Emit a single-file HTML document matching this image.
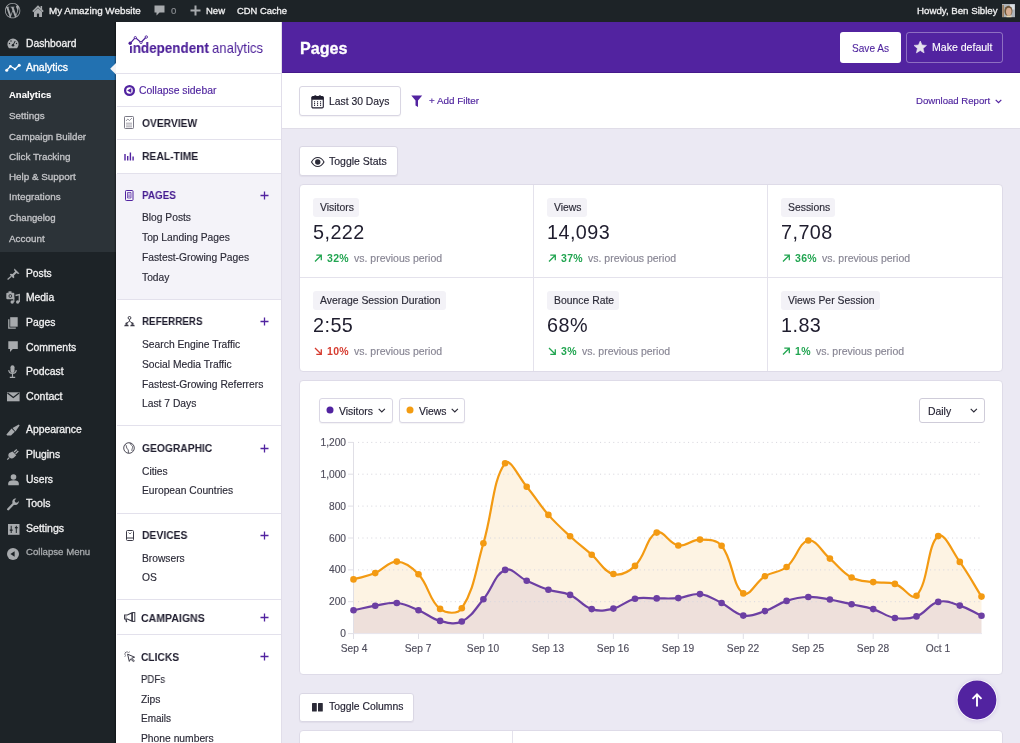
<!DOCTYPE html>
<html><head><meta charset="utf-8">
<style>
*{box-sizing:border-box;margin:0;padding:0}
html,body{width:1020px;height:743px;overflow:hidden}
body{position:relative;background:#ebe9f3;font-family:"Liberation Sans",sans-serif;color:#1e1d2b}
.t{position:absolute;white-space:nowrap;will-change:transform}
.r{position:absolute}
svg.r{overflow:visible}
</style></head>
<body>
<div class="r" style="left:0px;top:0px;width:1020px;height:22px;background:#1d2327"></div>
<div class="t" style="left:49.40px;top:4.69px;font-size:9.85px;line-height:12px;color:#f0f0f1;-webkit-text-stroke:0.3px #f0f0f1;">My Amazing Website</div>
<div class="t" style="left:170.60px;top:4.77px;font-size:9.6px;line-height:12px;color:#8c8f94;-webkit-text-stroke:0.15px #8c8f94;">0</div>
<div class="t" style="left:206.00px;top:4.81px;font-size:9.5px;line-height:12px;color:#f0f0f1;-webkit-text-stroke:0.3px #f0f0f1;">New</div>
<div class="t" style="left:236.70px;top:4.84px;font-size:9.4px;line-height:12px;color:#f0f0f1;-webkit-text-stroke:0.3px #f0f0f1;">CDN Cache</div>
<div class="t" style="left:916.50px;top:5.04px;font-size:9.7px;line-height:12px;color:#f0f0f1;-webkit-text-stroke:0.3px #f0f0f1;">Howdy, Ben Sibley</div>
<svg class="r" style="left:4.5px;top:3px" width="15.3" height="15.3" viewBox="0 0 24 24"><path fill="#a7aaad" d="M21.469 6.825c.84 1.537 1.318 3.3 1.318 5.175 0 3.979-2.156 7.456-5.363 9.325l3.295-9.527c.615-1.54.82-2.771.82-3.864 0-.405-.026-.78-.07-1.11m-7.981.105c.647-.03 1.232-.105 1.232-.105.582-.075.514-.93-.067-.899 0 0-1.755.135-2.88.135-1.064 0-2.850-.15-2.850-.15-.585-.03-.661.855-.075.885 0 0 .54.061 1.125.09l1.68 4.605-2.37 7.08L5.354 6.9c.649-.03 1.234-.1 1.234-.1.585-.075.516-.93-.065-.896 0 0-1.746.138-2.874.138-.2 0-.438-.008-.69-.015C4.911 3.15 8.235 1.215 12 1.215c2.809 0 5.365 1.072 7.286 2.833-.046-.003-.091-.009-.141-.009-1.06 0-1.812.923-1.812 1.914 0 .89.513 1.643 1.06 2.531.411.72.89 1.643.89 2.977 0 .915-.354 1.994-.821 3.479l-1.075 3.585-3.9-11.61.001.014zM12 22.784c-1.059 0-2.081-.153-3.048-.437l3.237-9.406 3.315 9.087c.024.053.05.101.078.149-1.12.393-2.325.609-3.582.609M1.211 12c0-1.564.336-3.05.935-4.39L7.29 21.709C3.694 19.96 1.212 16.271 1.211 12M12 0C5.385 0 0 5.385 0 12s5.385 12 12 12 12-5.385 12-12S18.615 0 12 0"/></svg>
<svg class="r" style="left:32px;top:5px" width="12" height="12.5" viewBox="0 0 12 12.5"><path d="M0.8,6.6 L6,1.4 L11.2,6.6" fill="none" stroke="#a7aaad" stroke-width="1.5"/><path d="M2,6.8 L6,2.9 L10,6.8 V12 H2 Z" fill="#a7aaad"/><rect x="8.6" y="1" width="1.5" height="3.5" fill="#a7aaad"/><rect x="4.9" y="8.6" width="2.2" height="3.4" fill="#1d2327"/></svg>
<svg class="r" style="left:154px;top:5px" width="11" height="12" viewBox="0 0 11 12"><path d="M0.5,0.5 h10 v7 h-5 l-3,3 v-3 h-2 z" fill="#a7aaad"/></svg>
<svg class="r" style="left:190px;top:5px" width="11" height="11" viewBox="0 0 11 11"><path d="M5.5,0.5 v10 M0.5,5.5 h10" stroke="#a7aaad" stroke-width="2"/></svg>
<svg class="r" style="left:1001.8px;top:3.7px" width="13" height="13.2" viewBox="0 0 13 13.2"><rect x="0" y="0" width="13" height="13.2" fill="#aeb4ba"/><rect x="8" y="0.5" width="4.5" height="5" fill="#d8dde0"/><rect x="0.3" y="1" width="1.6" height="12" fill="#9a7a5a"/><ellipse cx="6.4" cy="7" rx="4" ry="5.2" fill="#6e5638"/><ellipse cx="6.8" cy="7.6" rx="2.8" ry="3.9" fill="#d6ad92"/><rect x="4.5" y="11.5" width="5" height="1.7" fill="#e8d6b0"/></svg>
<div class="r" style="left:0px;top:22px;width:116px;height:721px;background:#1d2327"></div>
<div class="r" style="left:0px;top:80px;width:116px;height:172px;background:#2c3338"></div>
<div class="r" style="left:0px;top:56px;width:116px;height:24px;background:#2271b1"></div>
<div class="r" style="left:113.5px;top:22px;width:2.5px;height:721px;background:linear-gradient(90deg,rgba(0,0,0,0),rgba(0,0,0,0.4))"></div>
<svg class="r" style="left:110px;top:62.5px" width="6" height="11.5" viewBox="0 0 6 11.5"><path d="M6,0 L0.2,5.75 L6,11.5 Z" fill="#f4f4f6"/></svg>
<div class="t" style="left:26.10px;top:36.93px;font-size:10.3px;line-height:13px;color:#f0f0f1;-webkit-text-stroke:0.3px #f0f0f1;">Dashboard</div>
<div class="t" style="left:26.10px;top:61.46px;font-size:10.5px;line-height:13px;color:#fff;-webkit-text-stroke:0.3px #fff;">Analytics</div>
<div class="t" style="left:8.80px;top:89.11px;font-size:9.5px;line-height:12px;color:#fff;font-weight:700;-webkit-text-stroke:0.1px #fff;">Analytics</div>
<div class="t" style="left:8.80px;top:109.97px;font-size:9.9px;line-height:12px;color:#c3c4c7;-webkit-text-stroke:0.3px #c3c4c7;">Settings</div>
<div class="t" style="left:8.80px;top:130.64px;font-size:9.7px;line-height:12px;color:#c3c4c7;-webkit-text-stroke:0.3px #c3c4c7;">Campaign Builder</div>
<div class="t" style="left:8.80px;top:150.87px;font-size:9.9px;line-height:12px;color:#c3c4c7;-webkit-text-stroke:0.3px #c3c4c7;">Click Tracking</div>
<div class="t" style="left:8.80px;top:171.29px;font-size:9.85px;line-height:12px;color:#c3c4c7;-webkit-text-stroke:0.3px #c3c4c7;">Help &amp; Support</div>
<div class="t" style="left:8.80px;top:191.37px;font-size:9.9px;line-height:12px;color:#c3c4c7;-webkit-text-stroke:0.3px #c3c4c7;">Integrations</div>
<div class="t" style="left:8.80px;top:211.86px;font-size:9.65px;line-height:12px;color:#c3c4c7;-webkit-text-stroke:0.3px #c3c4c7;">Changelog</div>
<div class="t" style="left:8.80px;top:232.57px;font-size:9.9px;line-height:12px;color:#c3c4c7;-webkit-text-stroke:0.3px #c3c4c7;">Account</div>
<div class="t" style="left:25.90px;top:266.55px;font-size:10.25px;line-height:13px;color:#f0f0f1;-webkit-text-stroke:0.3px #f0f0f1;">Posts</div>
<div class="t" style="left:25.90px;top:290.91px;font-size:10.35px;line-height:13px;color:#f0f0f1;-webkit-text-stroke:0.3px #f0f0f1;">Media</div>
<div class="t" style="left:25.90px;top:315.61px;font-size:10.35px;line-height:13px;color:#f0f0f1;-webkit-text-stroke:0.3px #f0f0f1;">Pages</div>
<div class="t" style="left:25.90px;top:340.80px;font-size:10.4px;line-height:13px;color:#f0f0f1;-webkit-text-stroke:0.3px #f0f0f1;">Comments</div>
<div class="t" style="left:25.90px;top:365.10px;font-size:10.4px;line-height:13px;color:#f0f0f1;-webkit-text-stroke:0.3px #f0f0f1;">Podcast</div>
<div class="t" style="left:25.90px;top:390.23px;font-size:10.6px;line-height:13px;color:#f0f0f1;-webkit-text-stroke:0.3px #f0f0f1;">Contact</div>
<div class="t" style="left:25.90px;top:422.71px;font-size:10.35px;line-height:13px;color:#f0f0f1;-webkit-text-stroke:0.3px #f0f0f1;">Appearance</div>
<div class="t" style="left:25.90px;top:447.70px;font-size:10.4px;line-height:13px;color:#f0f0f1;-webkit-text-stroke:0.3px #f0f0f1;">Plugins</div>
<div class="t" style="left:25.90px;top:472.61px;font-size:10.35px;line-height:13px;color:#f0f0f1;-webkit-text-stroke:0.3px #f0f0f1;">Users</div>
<div class="t" style="left:25.90px;top:496.76px;font-size:10.5px;line-height:13px;color:#f0f0f1;-webkit-text-stroke:0.3px #f0f0f1;">Tools</div>
<div class="t" style="left:25.90px;top:521.64px;font-size:10.55px;line-height:13px;color:#f0f0f1;-webkit-text-stroke:0.3px #f0f0f1;">Settings</div>
<div class="t" style="left:25.90px;top:546.46px;font-size:9.65px;line-height:12px;color:#a7aaad;-webkit-text-stroke:0.3px #a7aaad;">Collapse Menu</div>
<svg class="r" style="left:7px;top:38px" width="12" height="11" viewBox="0 0 12 11"><path d="M6,0.5 A5.6,5.6 0 0 0 0.4,6.1 C0.4,7.8 1,9.2 2,10.3 L10,10.3 C11,9.2 11.6,7.8 11.6,6.1 A5.6,5.6 0 0 0 6,0.5 Z" fill="#a7aaad"/><circle cx="6" cy="7.2" r="1.3" fill="#1d2327"/><path d="M6,7.2 L8.2,3" stroke="#1d2327" stroke-width="1"/><circle cx="2.5" cy="5.5" r=".7" fill="#1d2327"/><circle cx="4" cy="3" r=".7" fill="#1d2327"/><circle cx="9.5" cy="5.5" r=".7" fill="#1d2327"/></svg>
<svg class="r" style="left:5px;top:63px" width="16" height="10" viewBox="0 0 16 10"><path d="M1.7,7.3 L5.4,3.3 L10.1,6 L14.2,2.3" fill="none" stroke="#fff" stroke-width="1.3"/><circle cx="1.7" cy="7.3" r="1.5" fill="#fff"/><circle cx="5.4" cy="3.3" r="1.3" fill="#fff"/><circle cx="10.1" cy="6" r="1.3" fill="#fff"/><circle cx="14.2" cy="2.3" r="1.5" fill="#fff"/></svg>
<svg class="r" style="left:7px;top:268px" width="13" height="12" viewBox="0 0 13 12"><path d="M7.5,0.5 L12.5,5.5 L11,6 L9.5,5 L7,7.5 L7.3,9.6 L6.3,10.3 L2.8,6.8 L3.5,5.8 L5.6,6.1 L8.1,3.6 L7,2 Z" fill="#a7aaad"/><path d="M4.3,8.3 L0.6,11.5" stroke="#a7aaad" stroke-width="1.2"/></svg>
<svg class="r" style="left:6px;top:291px" width="14" height="13" viewBox="0 0 14 13"><rect x="0.3" y="1.8" width="8" height="6.5" rx="1" fill="#a7aaad"/><rect x="2.5" y="0.3" width="3" height="2" fill="#a7aaad"/><circle cx="4.3" cy="5" r="1.8" fill="#1d2327"/><circle cx="4.3" cy="5" r="1" fill="#a7aaad"/><path d="M9.5,4.5 L13.3,3.5 L13.3,11" stroke="#a7aaad" stroke-width="1.3" fill="none"/><circle cx="11.7" cy="11" r="1.7" fill="#a7aaad"/><circle cx="6.2" cy="11" r="1.7" fill="#a7aaad"/><path d="M7.8,11 L7.8,6.5" stroke="#a7aaad" stroke-width="1.2"/></svg>
<svg class="r" style="left:7.5px;top:316.5px" width="10" height="12" viewBox="0 0 10 12"><rect x="2.2" y="0.2" width="7.5" height="9.5" fill="#a7aaad"/><path d="M0.8,2.2 L0.8,11.2 L7.8,11.2" fill="none" stroke="#a7aaad" stroke-width="1.3"/></svg>
<svg class="r" style="left:7.5px;top:340.5px" width="10" height="12" viewBox="0 0 10 12"><path d="M0.3,0.3 h9.5 v7.6 h-5 l-2.8,3 v-3 h-1.7 z" fill="#a7aaad"/></svg>
<svg class="r" style="left:8.3px;top:365px" width="9" height="13" viewBox="0 0 9 13"><rect x="2.5" y="0.2" width="4" height="7.8" rx="2" fill="#a7aaad"/><path d="M0.8,5 C0.8,9.5 8.2,9.5 8.2,5" fill="none" stroke="#a7aaad" stroke-width="1.1"/><path d="M4.5,9 L4.5,12.2 M1.8,12.3 L7.2,12.3" stroke="#a7aaad" stroke-width="1.2"/></svg>
<svg class="r" style="left:7px;top:392px" width="13" height="10" viewBox="0 0 13 10"><rect x="0" y="0.3" width="12.6" height="9" fill="#a7aaad"/><path d="M0.5,1 L6.3,5.5 L12.1,1" fill="none" stroke="#1d2327" stroke-width="1.2"/></svg>
<svg class="r" style="left:5.7px;top:424px" width="14" height="12" viewBox="0 0 14 12"><path d="M6.5,4 L12.8,0.6 L13.6,1.6 L9.5,7.5 Z" fill="#a7aaad"/><path d="M5.5,4.5 L8.8,7.8 L5,11.6 L1.2,11.6 L0.4,10.4 Z" fill="#a7aaad"/></svg>
<svg class="r" style="left:7px;top:449px" width="12" height="11" viewBox="0 0 12 11"><path d="M5.5,2.5 L9.3,6.3 L7,8.6 C5.7,9.9 3.8,9.9 2.5,8.6 L2.3,8.4 C1,7.1 1,5.2 2.3,3.9 Z" fill="#a7aaad"/><path d="M7,3 L9.8,0.4 M8.5,4.7 L11.3,2 M2.2,8.6 L0.3,10.6" stroke="#a7aaad" stroke-width="1.3"/></svg>
<svg class="r" style="left:7.7px;top:473.5px" width="11" height="11.5" viewBox="0 0 11 11.5"><circle cx="5.5" cy="3" r="2.8" fill="#a7aaad"/><path d="M0.2,11.2 L0.2,9.5 C0.2,7.2 2.3,6.3 5.5,6.3 C8.7,6.3 10.8,7.2 10.8,9.5 L10.8,11.2 Z" fill="#a7aaad"/></svg>
<svg class="r" style="left:7px;top:497.5px" width="12.5" height="12.5" viewBox="0 0 12.5 12.5"><path d="M1.2,11.2 L6.5,5.8" stroke="#a7aaad" stroke-width="2.3" stroke-linecap="round"/><path d="M5.5,5 C4.8,2.6 6.6,0.3 9.3,0.6 L7.6,2.4 L8.2,4.2 L10,4.8 L11.8,3.1 C12.2,5.8 9.8,7.6 7.4,6.9 Z" fill="#a7aaad"/></svg>
<svg class="r" style="left:7.7px;top:523.5px" width="11.5" height="11" viewBox="0 0 11.5 11"><rect x="0" y="0" width="11.5" height="10.8" fill="#a7aaad"/><path d="M3.2,1.8 L3.2,9 M8.3,1.8 L8.3,9" stroke="#1d2327" stroke-width="1"/><rect x="1.8" y="5.5" width="2.8" height="1.3" fill="#1d2327"/><rect x="6.9" y="3" width="2.8" height="1.3" fill="#1d2327"/></svg>
<svg class="r" style="left:6.8px;top:547.6px" width="12" height="12" viewBox="0 0 12 12"><circle cx="6" cy="6" r="6" fill="#a7aaad"/><path d="M3.4,6 L7.6,3.3 L7.6,8.7 Z" fill="#1d2327"/></svg>
<div class="r" style="left:116px;top:22px;width:166px;height:721px;background:#fff"></div>
<div class="r" style="left:281px;top:22px;width:1px;height:721px;background:#e1deea"></div>
<div class="r" style="left:116px;top:73px;width:165px;height:1px;background:#e3e1ec"></div>
<div class="t" style="left:129.00px;top:38.10px;font-size:15px;line-height:19px;color:#4b1e98;font-weight:700;transform:scaleX(0.895);transform-origin:0 0;-webkit-text-stroke:0.1px #4b1e98;">independent</div>
<div class="t" style="left:211.80px;top:38.10px;font-size:15px;line-height:19px;color:#4b1e98;transform:scaleX(0.875);transform-origin:0 0;">analytics</div>
<div class="r" style="left:128.5px;top:41px;width:4.0px;height:4.5px;background:#fff"></div>
<svg class="r" style="left:128px;top:35px" width="22" height="10" viewBox="0 0 22 10"><path d="M2.2,8.3 L7.3,2.6 L13,7.5 L18.3,2" fill="none" stroke="#4b1e98" stroke-width="1.2"/><circle cx="2.2" cy="8.3" r="1.7" fill="#4b1e98"/><circle cx="7.3" cy="2.6" r="1.1" fill="#fff" stroke="#4b1e98" stroke-width="0.9"/><circle cx="13" cy="7.5" r="1.1" fill="#fff" stroke="#4b1e98" stroke-width="0.9"/><circle cx="18.3" cy="2" r="1.2" fill="#fff" stroke="#4b1e98" stroke-width="0.9"/></svg>
<svg class="r" style="left:124px;top:84.5px" width="11" height="11" viewBox="0 0 11 11"><circle cx="5.5" cy="5.5" r="4.4" fill="#fff" stroke="#5123a0" stroke-width="2.3"/><path d="M3.2,5.5 L7.3,3 L7.3,8 Z" fill="#5123a0"/></svg>
<div class="t" style="left:139.10px;top:83.50px;font-size:10.4px;line-height:13px;color:#4b1f9c;-webkit-text-stroke:0.15px #4b1f9c;">Collapse sidebar</div>
<div class="r" style="left:117px;top:106px;width:164px;height:1px;background:#e3e1ec"></div>
<div class="t" style="left:141.70px;top:116.22px;font-size:10.9px;line-height:14px;color:#1f1d2e;font-weight:700;transform:scaleX(0.941);transform-origin:0 0;">OVERVIEW</div>
<svg class="r" style="left:124px;top:116px" width="10" height="13" viewBox="0 0 10 13"><rect x="0.5" y="0.5" width="9" height="12" rx="0.8" fill="none" stroke="#6b6a78" stroke-width="0.9"/><path d="M2,5 L3.8,3 L5.5,4.5 L8,2" fill="none" stroke="#6b6a78" stroke-width="0.7"/><path d="M2,7.2 h6 M2,9 h6 M2,10.8 h6" stroke="#6b6a78" stroke-width="0.6"/></svg>
<div class="r" style="left:117px;top:139px;width:164px;height:1px;background:#e3e1ec"></div>
<div class="t" style="left:141.70px;top:149.22px;font-size:10.9px;line-height:14px;color:#1f1d2e;font-weight:700;transform:scaleX(0.947);transform-origin:0 0;">REAL-TIME</div>
<svg class="r" style="left:124px;top:151px" width="10" height="10" viewBox="0 0 10 10"><path d="M1,3 V9.5 M3.7,5 V9.5 M6.4,1.5 V9.5 M9.1,5.5 V9.5" stroke="#5123a0" stroke-width="1.4"/></svg>
<div class="r" style="left:117px;top:172.5px;width:164px;height:1.0px;background:#e3e1ec"></div>
<div class="r" style="left:116px;top:173.5px;width:165px;height:125.5px;background:#f4f3f9"></div>
<div class="r" style="left:117px;top:299px;width:164px;height:1px;background:#e3e1ec"></div>
<div class="t" style="left:141.60px;top:187.62px;font-size:10.9px;line-height:14px;color:#43198f;font-weight:700;transform:scaleX(0.908);transform-origin:0 0;">PAGES</div>
<svg class="r" style="left:125px;top:189.5px" width="9" height="11" viewBox="0 0 9 11"><rect x="0.5" y="0.5" width="7.5" height="10" rx="0.8" fill="none" stroke="#5123a0" stroke-width="1"/><path d="M2.5,2.5 h3.5 v5.5 h-3.5 z" fill="none" stroke="#5123a0" stroke-width="0.7"/><path d="M3,4 h2.5 M3,5.3 h2.5 M3,6.6 h2.5" stroke="#5123a0" stroke-width="0.5"/></svg>
<svg class="r" style="left:259.7px;top:190.5px" width="9" height="9" viewBox="0 0 9 9"><path d="M4.5,0.5 V8.5 M0.5,4.5 H8.5" stroke="#5123a0" stroke-width="1.3"/></svg>
<div class="t" style="left:141.50px;top:211.25px;font-size:10.25px;line-height:13px;color:#2b2a37;-webkit-text-stroke:0.15px #2b2a37;">Blog Posts</div>
<div class="t" style="left:141.50px;top:231.15px;font-size:10.25px;line-height:13px;color:#2b2a37;-webkit-text-stroke:0.15px #2b2a37;">Top Landing Pages</div>
<div class="t" style="left:141.50px;top:250.75px;font-size:10.25px;line-height:13px;color:#2b2a37;-webkit-text-stroke:0.15px #2b2a37;">Fastest-Growing Pages</div>
<div class="t" style="left:141.50px;top:270.55px;font-size:10.25px;line-height:13px;color:#2b2a37;-webkit-text-stroke:0.15px #2b2a37;">Today</div>
<div class="r" style="left:117px;top:425px;width:164px;height:1px;background:#e3e1ec"></div>
<div class="t" style="left:141.60px;top:314.02px;font-size:10.9px;line-height:14px;color:#1f1d2e;font-weight:700;transform:scaleX(0.900);transform-origin:0 0;">REFERRERS</div>
<svg class="r" style="left:124px;top:316px" width="11" height="10.5" viewBox="0 0 11 10.5"><circle cx="5.5" cy="1.9" r="1.4" fill="none" stroke="#3a3946" stroke-width="1"/><path d="M5.5,3.3 V5.2 M2.5,7.2 L5.5,5.2 L8.5,7.2" fill="none" stroke="#3a3946" stroke-width="0.9"/><circle cx="2.5" cy="7.6" r="1.1" fill="#3a3946"/><circle cx="8.5" cy="7.6" r="1.1" fill="#3a3946"/><path d="M0.2,10.3 A2.3,2 0 0 1 4.8,10.3 Z M6.2,10.3 A2.3,2 0 0 1 10.8,10.3 Z" fill="#3a3946"/></svg>
<svg class="r" style="left:259.7px;top:317.0px" width="9" height="9" viewBox="0 0 9 9"><path d="M4.5,0.5 V8.5 M0.5,4.5 H8.5" stroke="#5123a0" stroke-width="1.3"/></svg>
<div class="t" style="left:141.50px;top:338.03px;font-size:10.3px;line-height:13px;color:#2b2a37;-webkit-text-stroke:0.15px #2b2a37;">Search Engine Traffic</div>
<div class="t" style="left:141.50px;top:357.83px;font-size:10.3px;line-height:13px;color:#2b2a37;-webkit-text-stroke:0.15px #2b2a37;">Social Media Traffic</div>
<div class="t" style="left:141.50px;top:377.63px;font-size:10.3px;line-height:13px;color:#2b2a37;-webkit-text-stroke:0.15px #2b2a37;">Fastest-Growing Referrers</div>
<div class="t" style="left:141.50px;top:397.03px;font-size:10.3px;line-height:13px;color:#2b2a37;-webkit-text-stroke:0.15px #2b2a37;">Last 7 Days</div>
<div class="r" style="left:117px;top:512.5px;width:164px;height:1.0px;background:#e3e1ec"></div>
<div class="t" style="left:141.60px;top:440.92px;font-size:10.9px;line-height:14px;color:#1f1d2e;font-weight:700;transform:scaleX(0.944);transform-origin:0 0;">GEOGRAPHIC</div>
<svg class="r" style="left:123px;top:442px" width="12" height="12" viewBox="0 0 12 12"><circle cx="6" cy="6" r="5.3" fill="none" stroke="#3a3946" stroke-width="0.9"/><path d="M2.5,2.5 C4,4 3,6 4.5,7 C6,8 5,10 5.5,11 M7,1 C7.5,3 9,3 9.5,4.5 C10,6 8.5,7 9,9" fill="none" stroke="#3a3946" stroke-width="0.8"/></svg>
<svg class="r" style="left:259.7px;top:443.5px" width="9" height="9" viewBox="0 0 9 9"><path d="M4.5,0.5 V8.5 M0.5,4.5 H8.5" stroke="#5123a0" stroke-width="1.3"/></svg>
<div class="t" style="left:141.50px;top:464.65px;font-size:10.25px;line-height:13px;color:#2b2a37;-webkit-text-stroke:0.15px #2b2a37;">Cities</div>
<div class="t" style="left:141.50px;top:484.05px;font-size:10.25px;line-height:13px;color:#2b2a37;-webkit-text-stroke:0.15px #2b2a37;">European Countries</div>
<div class="r" style="left:117px;top:599.3px;width:164px;height:1.0px;background:#e3e1ec"></div>
<div class="t" style="left:141.60px;top:527.52px;font-size:10.9px;line-height:14px;color:#1f1d2e;font-weight:700;transform:scaleX(0.949);transform-origin:0 0;">DEVICES</div>
<svg class="r" style="left:125.5px;top:530px" width="8" height="11" viewBox="0 0 8 11"><rect x="0.5" y="0.5" width="7" height="10" rx="1" fill="none" stroke="#3a3946" stroke-width="1"/><path d="M0.5,8 h7" stroke="#3a3946" stroke-width="1"/><path d="M2.5,2.5 L4,4 L5.5,2.5" fill="none" stroke="#3a3946" stroke-width="0.7"/></svg>
<svg class="r" style="left:259.7px;top:530.5px" width="9" height="9" viewBox="0 0 9 9"><path d="M4.5,0.5 V8.5 M0.5,4.5 H8.5" stroke="#5123a0" stroke-width="1.3"/></svg>
<div class="t" style="left:141.50px;top:551.65px;font-size:10.25px;line-height:13px;color:#2b2a37;-webkit-text-stroke:0.15px #2b2a37;">Browsers</div>
<div class="t" style="left:141.50px;top:571.45px;font-size:10.25px;line-height:13px;color:#2b2a37;-webkit-text-stroke:0.15px #2b2a37;">OS</div>
<div class="r" style="left:117px;top:633.5px;width:164px;height:1.0px;background:#e3e1ec"></div>
<div class="t" style="left:141.40px;top:610.52px;font-size:10.9px;line-height:14px;color:#1f1d2e;font-weight:700;transform:scaleX(0.970);transform-origin:0 0;">CAMPAIGNS</div>
<svg class="r" style="left:124px;top:612.3px" width="11.5" height="10.5" viewBox="0 0 11.5 10.5"><path d="M0.6,3 H3.3 L7.8,0.9 V9.1 L3.3,7 H0.6 Z" fill="none" stroke="#3a3946" stroke-width="1.1"/><rect x="8.4" y="0.6" width="2.4" height="8.8" fill="none" stroke="#3a3946" stroke-width="1"/><path d="M1.9,7 L2.6,10.2" stroke="#3a3946" stroke-width="1.3"/><path d="M2,4.3 V5.7" stroke="#3a3946" stroke-width="0.8"/></svg>
<svg class="r" style="left:259.7px;top:613.0px" width="9" height="9" viewBox="0 0 9 9"><path d="M4.5,0.5 V8.5 M0.5,4.5 H8.5" stroke="#5123a0" stroke-width="1.3"/></svg>
<div class="t" style="left:141.40px;top:649.62px;font-size:10.9px;line-height:14px;color:#1f1d2e;font-weight:700;transform:scaleX(0.939);transform-origin:0 0;">CLICKS</div>
<svg class="r" style="left:124px;top:651.3px" width="11.5" height="10.5" viewBox="0 0 11.5 10.5"><path d="M3.6,3.2 L10.6,6.2 L7.6,7.3 L10.4,9.8 L9.3,10.5 L6.6,8 L5.3,10.4 Z" fill="none" stroke="#3a3946" stroke-width="1"/><path d="M3,0.2 V1.8 M0.2,3 H1.8 M0.9,0.9 L1.9,1.9 M0.6,5.4 L1.9,4.6 M5.4,0.6 L4.6,1.9" stroke="#3a3946" stroke-width="0.8"/></svg>
<svg class="r" style="left:259.7px;top:652.0px" width="9" height="9" viewBox="0 0 9 9"><path d="M4.5,0.5 V8.5 M0.5,4.5 H8.5" stroke="#5123a0" stroke-width="1.3"/></svg>
<div class="t" style="left:141.30px;top:673.27px;font-size:10.2px;line-height:13px;color:#2b2a37;transform:scaleX(0.94);transform-origin:0 0;-webkit-text-stroke:0.15px #2b2a37;">PDFs</div>
<div class="t" style="left:141.30px;top:692.73px;font-size:10.3px;line-height:13px;color:#2b2a37;-webkit-text-stroke:0.15px #2b2a37;">Zips</div>
<div class="t" style="left:141.30px;top:713.33px;font-size:10px;line-height:12px;color:#2b2a37;-webkit-text-stroke:0.15px #2b2a37;">Emails</div>
<div class="t" style="left:141.30px;top:732.33px;font-size:10.3px;line-height:13px;color:#2b2a37;-webkit-text-stroke:0.15px #2b2a37;">Phone numbers</div>
<div class="r" style="left:282px;top:22px;width:738px;height:51px;background:#5223a0"></div>
<div class="r" style="left:282px;top:72px;width:738px;height:1px;background:#45198a"></div>
<div class="t" style="left:300.00px;top:37.92px;font-size:16.1px;line-height:20px;color:#fff;font-weight:700;-webkit-text-stroke:0.3px #fff;">Pages</div>
<div class="r" style="left:840px;top:32px;width:61px;height:31px;background:#fff;border-radius:3px"></div>
<div class="t" style="left:852.00px;top:41.50px;font-size:10.1px;line-height:13px;color:#4b1f9c;-webkit-text-stroke:0.1px #4b1f9c;">Save As</div>
<div class="r" style="left:906px;top:32px;width:97px;height:31px;border:1px solid rgba(255,255,255,0.35);border-radius:3px"></div>
<svg class="r" style="left:914px;top:41.3px" width="12.5" height="12.5" viewBox="0 0 12.5 12.5"><path d="M6.25,0 L8,4 L12.5,4.4 L9.1,7.4 L10.1,11.9 L6.25,9.5 L2.4,11.9 L3.4,7.4 L0,4.4 L4.5,4 Z" fill="#e6e2ee" stroke="#e6e2ee" stroke-width="0.6" stroke-linejoin="round"/></svg>
<div class="t" style="left:931.50px;top:41.34px;font-size:10.55px;line-height:13px;color:#fff;-webkit-text-stroke:0.12px #fff;">Make default</div>
<div class="r" style="left:282px;top:73px;width:738px;height:55px;background:#fff"></div>
<div class="r" style="left:282px;top:128px;width:738px;height:1px;background:#e0dde8"></div>
<div class="r" style="left:299px;top:86px;width:101.5px;height:29.5px;background:#fff;border:1px solid #d9d6e3;border-radius:3px;box-shadow:0 1px 1px rgba(30,20,60,0.05)"></div>
<svg class="r" style="left:311px;top:94.5px" width="13" height="13.5" viewBox="0 0 13 13.5"><rect x="0.9" y="1.6" width="11.4" height="11.3" rx="1.2" fill="none" stroke="#1f1d2e" stroke-width="1.1"/><rect x="0.6" y="1.6" width="12" height="3.2" rx="0.8" fill="#1f1d2e"/><circle cx="4.3" cy="1.5" r="1.3" fill="#1f1d2e"/><circle cx="8.9" cy="1.5" r="1.3" fill="#1f1d2e"/><path d="M3.6,6.2 v5.4 M6.6,6.2 v5.4 M9.6,6.2 v5.4" stroke="#1f1d2e" stroke-width="1" stroke-dasharray="1.2,0.6"/></svg>
<div class="t" style="left:329.40px;top:94.61px;font-size:10.35px;line-height:13px;color:#1f1d2e;-webkit-text-stroke:0.15px #1f1d2e;">Last 30 Days</div>
<svg class="r" style="left:411px;top:95px" width="11.5" height="12.5" viewBox="0 0 11.5 12.5"><path d="M0.3,0.5 H11.2 L7,5.5 V12 L4.5,10.5 V5.5 Z" fill="#5223a0"/></svg>
<div class="t" style="left:429.00px;top:95.29px;font-size:9.85px;line-height:12px;color:#4b1f9c;-webkit-text-stroke:0.15px #4b1f9c;">+ Add Filter</div>
<div class="t" style="left:916.00px;top:95.07px;font-size:9.6px;line-height:12px;color:#4b1f9c;-webkit-text-stroke:0.15px #4b1f9c;">Download Report</div>
<svg class="r" style="left:995px;top:98.5px" width="7" height="5" viewBox="0 0 7 5"><path d="M0.7,0.8 L3.5,3.7 L6.3,0.8" fill="none" stroke="#5223a0" stroke-width="1.2"/></svg>
<div class="r" style="left:299px;top:146px;width:99px;height:29.5px;background:#fff;border:1px solid #dad7e4;border-radius:3px;box-shadow:0 1px 1px rgba(30,20,60,0.05)"></div>
<svg class="r" style="left:311px;top:156.5px" width="13.5" height="10" viewBox="0 0 13.5 10"><path d="M0.5,5 C2.5,1.3 4.5,0.5 6.75,0.5 C9,0.5 11,1.3 13,5 C11,8.7 9,9.5 6.75,9.5 C4.5,9.5 2.5,8.7 0.5,5 Z" fill="none" stroke="#2b2a37" stroke-width="1.1"/><circle cx="6.75" cy="5" r="2.7" fill="#2b2a37"/></svg>
<div class="t" style="left:329.40px;top:154.76px;font-size:10.5px;line-height:13px;color:#1f1d2e;-webkit-text-stroke:0.15px #1f1d2e;">Toggle Stats</div>
<div class="r" style="left:299px;top:184px;width:704px;height:188px;background:#fff;border:1px solid #dedbe8;border-radius:4px"></div>
<div class="r" style="left:533px;top:185px;width:1px;height:186px;background:#e4e2ec"></div>
<div class="r" style="left:767px;top:185px;width:1px;height:186px;background:#e4e2ec"></div>
<div class="r" style="left:300px;top:277px;width:702px;height:1px;background:#e4e2ec"></div>
<div class="r" style="left:313.0px;top:198px;width:45.903999999999996px;height:19px;background:#f3f2f7;border-radius:3px"></div>
<div class="t" style="left:319.50px;top:200.90px;font-size:10.4px;line-height:13px;color:#2b2a37;-webkit-text-stroke:0.15px #2b2a37;">Visitors</div>
<div class="t" style="left:313.20px;top:220.24px;font-size:19.8px;line-height:25px;color:#1f1d2e;letter-spacing:0.45px;">5,222</div>
<svg class="r" style="left:313.5px;top:254px" width="8.5" height="8.5" viewBox="0 0 8.5 8.5"><path d="M1,7.5 L7.3,1.2 M2.3,1.2 H7.3 V6.2" fill="none" stroke="#22a551" stroke-width="1.3"/></svg>
<div class="t" style="left:327.00px;top:251.76px;font-size:10.5px;line-height:13px;color:#22a551;font-weight:700;letter-spacing:0.3px;">32%</div>
<div class="t" style="left:354.42px;top:251.76px;font-size:10.5px;line-height:13px;color:#878593;-webkit-text-stroke:0.15px #878593;">vs. previous period</div>
<div class="r" style="left:547.0px;top:198px;width:39.549600000000055px;height:19px;background:#f3f2f7;border-radius:3px"></div>
<div class="t" style="left:553.50px;top:200.90px;font-size:10.4px;line-height:13px;color:#2b2a37;-webkit-text-stroke:0.15px #2b2a37;">Views</div>
<div class="t" style="left:547.20px;top:220.24px;font-size:19.8px;line-height:25px;color:#1f1d2e;letter-spacing:0.45px;">14,093</div>
<svg class="r" style="left:547.5px;top:254px" width="8.5" height="8.5" viewBox="0 0 8.5 8.5"><path d="M1,7.5 L7.3,1.2 M2.3,1.2 H7.3 V6.2" fill="none" stroke="#22a551" stroke-width="1.3"/></svg>
<div class="t" style="left:561.00px;top:251.76px;font-size:10.5px;line-height:13px;color:#22a551;font-weight:700;letter-spacing:0.3px;">37%</div>
<div class="t" style="left:588.42px;top:251.76px;font-size:10.5px;line-height:13px;color:#878593;-webkit-text-stroke:0.15px #878593;">vs. previous period</div>
<div class="r" style="left:781.0px;top:198px;width:54.20320000000004px;height:19px;background:#f3f2f7;border-radius:3px"></div>
<div class="t" style="left:787.50px;top:200.90px;font-size:10.4px;line-height:13px;color:#2b2a37;-webkit-text-stroke:0.15px #2b2a37;">Sessions</div>
<div class="t" style="left:781.20px;top:220.24px;font-size:19.8px;line-height:25px;color:#1f1d2e;letter-spacing:0.45px;">7,708</div>
<svg class="r" style="left:781.5px;top:254px" width="8.5" height="8.5" viewBox="0 0 8.5 8.5"><path d="M1,7.5 L7.3,1.2 M2.3,1.2 H7.3 V6.2" fill="none" stroke="#22a551" stroke-width="1.3"/></svg>
<div class="t" style="left:795.00px;top:251.76px;font-size:10.5px;line-height:13px;color:#22a551;font-weight:700;letter-spacing:0.3px;">36%</div>
<div class="t" style="left:822.42px;top:251.76px;font-size:10.5px;line-height:13px;color:#878593;-webkit-text-stroke:0.15px #878593;">vs. previous period</div>
<div class="r" style="left:313.0px;top:291px;width:132.64px;height:19px;background:#f3f2f7;border-radius:3px"></div>
<div class="t" style="left:319.50px;top:293.90px;font-size:10.4px;line-height:13px;color:#2b2a37;-webkit-text-stroke:0.15px #2b2a37;">Average Session Duration</div>
<div class="t" style="left:313.20px;top:313.24px;font-size:19.8px;line-height:25px;color:#1f1d2e;letter-spacing:0.45px;">2:55</div>
<svg class="r" style="left:313.5px;top:347px" width="8.5" height="8.5" viewBox="0 0 8.5 8.5"><path d="M1,1 L7.3,7.3 M2.3,7.3 H7.3 V2.3" fill="none" stroke="#d63b2f" stroke-width="1.3"/></svg>
<div class="t" style="left:327.00px;top:344.76px;font-size:10.5px;line-height:13px;color:#d63b2f;font-weight:700;letter-spacing:0.3px;">10%</div>
<div class="t" style="left:354.42px;top:344.76px;font-size:10.5px;line-height:13px;color:#878593;-webkit-text-stroke:0.15px #878593;">vs. previous period</div>
<div class="r" style="left:547.0px;top:291px;width:72.13279999999997px;height:19px;background:#f3f2f7;border-radius:3px"></div>
<div class="t" style="left:553.50px;top:293.90px;font-size:10.4px;line-height:13px;color:#2b2a37;-webkit-text-stroke:0.15px #2b2a37;">Bounce Rate</div>
<div class="t" style="left:547.20px;top:313.24px;font-size:19.8px;line-height:25px;color:#1f1d2e;letter-spacing:0.45px;">68%</div>
<svg class="r" style="left:547.5px;top:347px" width="8.5" height="8.5" viewBox="0 0 8.5 8.5"><path d="M1,1 L7.3,7.3 M2.3,7.3 H7.3 V2.3" fill="none" stroke="#22a551" stroke-width="1.3"/></svg>
<div class="t" style="left:561.00px;top:344.76px;font-size:10.5px;line-height:13px;color:#22a551;font-weight:700;letter-spacing:0.3px;">3%</div>
<div class="t" style="left:582.28px;top:344.76px;font-size:10.5px;line-height:13px;color:#878593;-webkit-text-stroke:0.15px #878593;">vs. previous period</div>
<div class="r" style="left:781.0px;top:291px;width:98.51760000000002px;height:19px;background:#f3f2f7;border-radius:3px"></div>
<div class="t" style="left:787.50px;top:293.90px;font-size:10.4px;line-height:13px;color:#2b2a37;-webkit-text-stroke:0.15px #2b2a37;">Views Per Session</div>
<div class="t" style="left:781.20px;top:313.24px;font-size:19.8px;line-height:25px;color:#1f1d2e;letter-spacing:0.45px;">1.83</div>
<svg class="r" style="left:781.5px;top:347px" width="8.5" height="8.5" viewBox="0 0 8.5 8.5"><path d="M1,7.5 L7.3,1.2 M2.3,1.2 H7.3 V6.2" fill="none" stroke="#22a551" stroke-width="1.3"/></svg>
<div class="t" style="left:795.00px;top:344.76px;font-size:10.5px;line-height:13px;color:#22a551;font-weight:700;letter-spacing:0.3px;">1%</div>
<div class="t" style="left:816.28px;top:344.76px;font-size:10.5px;line-height:13px;color:#878593;-webkit-text-stroke:0.15px #878593;">vs. previous period</div>
<div class="r" style="left:299px;top:380px;width:704px;height:295px;background:#fff;border:1px solid #dedbe8;border-radius:4px"></div>
<div class="r" style="left:318.5px;top:398px;width:74.0px;height:25px;background:#fff;border:1px solid #dad7e4;border-radius:3px;box-shadow:0 1px 1px rgba(30,20,60,0.05)"></div>
<svg class="r" style="left:325.8px;top:406.3px" width="8" height="8" viewBox="0 0 8 8"><circle cx="4" cy="4" r="3.5" fill="#5123a0"/></svg>
<div class="t" style="left:339.00px;top:405.10px;font-size:10.4px;line-height:13px;color:#1f1d2e;-webkit-text-stroke:0.15px #1f1d2e;">Visitors</div>
<svg class="r" style="left:378px;top:408px" width="8" height="5" viewBox="0 0 8 5"><path d="M0.7,0.8 L3.8,3.9 L6.9,0.8" fill="none" stroke="#2b2a37" stroke-width="1.1"/></svg>
<div class="r" style="left:398.5px;top:398px;width:66.5px;height:25px;background:#fff;border:1px solid #dad7e4;border-radius:3px;box-shadow:0 1px 1px rgba(30,20,60,0.05)"></div>
<svg class="r" style="left:405.8px;top:406.3px" width="8" height="8" viewBox="0 0 8 8"><circle cx="4" cy="4" r="3.5" fill="#f39c12"/></svg>
<div class="t" style="left:419.00px;top:405.10px;font-size:10.4px;line-height:13px;color:#1f1d2e;-webkit-text-stroke:0.15px #1f1d2e;">Views</div>
<svg class="r" style="left:451px;top:408px" width="8" height="5" viewBox="0 0 8 5"><path d="M0.7,0.8 L3.8,3.9 L6.9,0.8" fill="none" stroke="#2b2a37" stroke-width="1.1"/></svg>
<div class="r" style="left:918.5px;top:398px;width:66.0px;height:25px;background:#fff;border:1px solid #cfccd9;border-radius:3px"></div>
<div class="t" style="left:928.00px;top:405.10px;font-size:10.4px;line-height:13px;color:#1f1d2e;-webkit-text-stroke:0.15px #1f1d2e;">Daily</div>
<svg class="r" style="left:969.5px;top:408px" width="8" height="5" viewBox="0 0 8 5"><path d="M0.7,0.8 L3.8,3.9 L6.9,0.8" fill="none" stroke="#2b2a37" stroke-width="1.1"/></svg>
<svg class="r" style="left:0px;top:0px" width="1020" height="743" viewBox="0 0 1020 743"><path d="M353.5,579.4 C362.2,576.9 366.8,576.5 375.2,573.1 C384.2,569.3 388.3,561.3 396.8,561.6 C405.6,561.8 411.9,567.1 418.5,574.3 C429.2,586.0 428.8,600.0 440.1,608.9 C446.1,613.6 457.6,614.6 461.8,608.3 C474.9,588.3 475.6,569.5 483.4,543.3 C492.9,511.5 492.6,479.6 505.1,463.3 C509.9,457.0 518.5,476.9 526.7,486.7 C535.9,497.6 539.1,504.2 548.4,514.9 C556.4,524.0 561.1,528.0 570.1,536.2 C578.4,544.0 583.1,547.2 591.7,554.7 C600.4,562.4 603.7,571.5 613.4,574.0 C621.0,576.0 628.6,572.0 635.0,565.9 C646.0,555.4 646.1,537.6 656.7,532.6 C663.4,529.4 669.2,544.0 678.3,545.5 C686.5,546.8 691.3,539.5 700.0,539.6 C708.7,539.7 716.4,539.3 721.6,545.8 C733.7,560.9 732.0,585.5 743.3,593.4 C749.3,597.7 755.6,582.0 764.9,576.2 C772.9,571.4 779.5,572.8 786.6,567.0 C796.9,558.5 798.8,542.4 808.3,540.5 C816.1,539.0 821.3,551.2 829.9,558.6 C838.7,566.0 841.8,572.2 851.6,577.5 C859.1,581.6 864.5,580.8 873.2,582.1 C881.8,583.4 886.8,581.4 894.9,583.9 C904.1,586.8 911.7,601.0 916.5,595.7 C929.0,581.9 926.9,544.9 938.2,536.1 C944.2,531.4 952.0,551.0 959.8,561.9 C969.3,575.2 972.8,582.7 981.5,596.6 L981.5,633.6 L353.5,633.6 Z" fill="#fdf3e3"/>
<path d="M353.5,610.2 C362.2,608.4 366.4,607.2 375.2,605.7 C383.8,604.3 388.3,602.1 396.8,603.0 C405.7,603.9 410.0,606.7 418.5,610.2 C427.4,613.8 431.0,618.5 440.1,620.9 C448.3,623.0 454.7,625.1 461.8,621.5 C472.0,616.4 475.5,608.7 483.4,599.2 C492.8,588.0 494.7,574.3 505.1,569.9 C512.0,566.9 517.9,576.7 526.7,580.7 C535.3,584.6 539.5,586.9 548.4,589.8 C556.8,592.5 562.0,591.3 570.1,594.9 C579.4,599.0 582.3,606.1 591.7,609.1 C599.6,611.6 605.1,610.6 613.4,608.6 C622.4,606.4 625.9,600.8 635.0,598.7 C643.3,596.8 648.0,598.5 656.7,598.4 C665.3,598.3 669.7,598.9 678.3,598.1 C687.1,597.2 691.6,593.1 700.0,594.1 C708.9,595.1 713.3,598.9 721.6,603.0 C730.6,607.5 734.1,613.9 743.3,615.6 C751.4,617.1 756.6,613.9 764.9,611.1 C774.0,608.1 777.6,603.9 786.6,600.9 C794.9,598.2 799.6,597.2 808.3,597.0 C816.9,596.7 821.3,598.0 829.9,599.5 C838.6,601.0 842.9,602.4 851.6,604.3 C860.2,606.2 864.8,606.4 873.2,609.1 C882.1,611.9 885.9,616.5 894.9,618.0 C903.2,619.4 908.7,619.3 916.5,616.4 C926.0,612.9 928.8,604.2 938.2,601.9 C946.1,599.9 951.6,602.9 959.8,605.6 C968.9,608.4 972.8,611.7 981.5,615.8 L981.5,633.6 L353.5,633.6 Z" fill="#6a3aa0" fill-opacity="0.1"/><path d="M348,633.6 H353.5" stroke="#e0dfe6" stroke-width="1"/><path d="M358,601.7 H982" stroke="#d8d7de" stroke-width="1" stroke-dasharray="1.1,3.3"/><path d="M348,601.7 H353.5" stroke="#e0dfe6" stroke-width="1"/><path d="M358,569.9 H982" stroke="#d8d7de" stroke-width="1" stroke-dasharray="1.1,3.3"/><path d="M348,569.9 H353.5" stroke="#e0dfe6" stroke-width="1"/><path d="M358,538.0 H982" stroke="#d8d7de" stroke-width="1" stroke-dasharray="1.1,3.3"/><path d="M348,538.0 H353.5" stroke="#e0dfe6" stroke-width="1"/><path d="M358,506.1 H982" stroke="#d8d7de" stroke-width="1" stroke-dasharray="1.1,3.3"/><path d="M348,506.1 H353.5" stroke="#e0dfe6" stroke-width="1"/><path d="M358,474.2 H982" stroke="#d8d7de" stroke-width="1" stroke-dasharray="1.1,3.3"/><path d="M348,474.2 H353.5" stroke="#e0dfe6" stroke-width="1"/><path d="M358,442.4 H982" stroke="#d8d7de" stroke-width="1" stroke-dasharray="1.1,3.3"/><path d="M348,442.4 H353.5" stroke="#e0dfe6" stroke-width="1"/><path d="M353.5,442 V639" stroke="#e0dfe6" stroke-width="1"/><path d="M353.5,633.6 H982" stroke="#e8e6ee" stroke-width="1"/><path d="M353.5,633.6 V639" stroke="#e0dfe6" stroke-width="1"/><path d="M418.5,633.6 V639" stroke="#e0dfe6" stroke-width="1"/><path d="M483.4,633.6 V639" stroke="#e0dfe6" stroke-width="1"/><path d="M548.4,633.6 V639" stroke="#e0dfe6" stroke-width="1"/><path d="M613.4,633.6 V639" stroke="#e0dfe6" stroke-width="1"/><path d="M678.3,633.6 V639" stroke="#e0dfe6" stroke-width="1"/><path d="M743.3,633.6 V639" stroke="#e0dfe6" stroke-width="1"/><path d="M808.3,633.6 V639" stroke="#e0dfe6" stroke-width="1"/><path d="M873.2,633.6 V639" stroke="#e0dfe6" stroke-width="1"/><path d="M938.2,633.6 V639" stroke="#e0dfe6" stroke-width="1"/></svg>
<div class="t" style="left:45.50px;width:300px;text-align:right;top:627.17px;font-size:10.2px;line-height:13px;color:#4f4d5c;-webkit-text-stroke:0.15px #4f4d5c;">0</div>
<div class="t" style="left:45.50px;width:300px;text-align:right;top:595.30px;font-size:10.2px;line-height:13px;color:#4f4d5c;-webkit-text-stroke:0.15px #4f4d5c;">200</div>
<div class="t" style="left:45.50px;width:300px;text-align:right;top:563.43px;font-size:10.2px;line-height:13px;color:#4f4d5c;-webkit-text-stroke:0.15px #4f4d5c;">400</div>
<div class="t" style="left:45.50px;width:300px;text-align:right;top:531.56px;font-size:10.2px;line-height:13px;color:#4f4d5c;-webkit-text-stroke:0.15px #4f4d5c;">600</div>
<div class="t" style="left:45.50px;width:300px;text-align:right;top:499.69px;font-size:10.2px;line-height:13px;color:#4f4d5c;-webkit-text-stroke:0.15px #4f4d5c;">800</div>
<div class="t" style="left:45.50px;width:300px;text-align:right;top:467.82px;font-size:10.2px;line-height:13px;color:#4f4d5c;-webkit-text-stroke:0.15px #4f4d5c;">1,000</div>
<div class="t" style="left:45.50px;width:300px;text-align:right;top:435.95px;font-size:10.2px;line-height:13px;color:#4f4d5c;-webkit-text-stroke:0.15px #4f4d5c;">1,200</div>
<div class="t" style="left:203.50px;width:300px;text-align:center;top:641.77px;font-size:10.2px;line-height:13px;color:#4f4d5c;-webkit-text-stroke:0.15px #4f4d5c;">Sep 4</div>
<div class="t" style="left:268.47px;width:300px;text-align:center;top:641.77px;font-size:10.2px;line-height:13px;color:#4f4d5c;-webkit-text-stroke:0.15px #4f4d5c;">Sep 7</div>
<div class="t" style="left:333.43px;width:300px;text-align:center;top:641.77px;font-size:10.2px;line-height:13px;color:#4f4d5c;-webkit-text-stroke:0.15px #4f4d5c;">Sep 10</div>
<div class="t" style="left:398.40px;width:300px;text-align:center;top:641.77px;font-size:10.2px;line-height:13px;color:#4f4d5c;-webkit-text-stroke:0.15px #4f4d5c;">Sep 13</div>
<div class="t" style="left:463.36px;width:300px;text-align:center;top:641.77px;font-size:10.2px;line-height:13px;color:#4f4d5c;-webkit-text-stroke:0.15px #4f4d5c;">Sep 16</div>
<div class="t" style="left:528.33px;width:300px;text-align:center;top:641.77px;font-size:10.2px;line-height:13px;color:#4f4d5c;-webkit-text-stroke:0.15px #4f4d5c;">Sep 19</div>
<div class="t" style="left:593.29px;width:300px;text-align:center;top:641.77px;font-size:10.2px;line-height:13px;color:#4f4d5c;-webkit-text-stroke:0.15px #4f4d5c;">Sep 22</div>
<div class="t" style="left:658.26px;width:300px;text-align:center;top:641.77px;font-size:10.2px;line-height:13px;color:#4f4d5c;-webkit-text-stroke:0.15px #4f4d5c;">Sep 25</div>
<div class="t" style="left:723.22px;width:300px;text-align:center;top:641.77px;font-size:10.2px;line-height:13px;color:#4f4d5c;-webkit-text-stroke:0.15px #4f4d5c;">Sep 28</div>
<div class="t" style="left:788.19px;width:300px;text-align:center;top:641.77px;font-size:10.2px;line-height:13px;color:#4f4d5c;-webkit-text-stroke:0.15px #4f4d5c;">Oct 1</div>
<svg class="r" style="left:0px;top:0px" width="1020" height="743" viewBox="0 0 1020 743"><path d="M353.5,579.4 C362.2,576.9 366.8,576.5 375.2,573.1 C384.2,569.3 388.3,561.3 396.8,561.6 C405.6,561.8 411.9,567.1 418.5,574.3 C429.2,586.0 428.8,600.0 440.1,608.9 C446.1,613.6 457.6,614.6 461.8,608.3 C474.9,588.3 475.6,569.5 483.4,543.3 C492.9,511.5 492.6,479.6 505.1,463.3 C509.9,457.0 518.5,476.9 526.7,486.7 C535.9,497.6 539.1,504.2 548.4,514.9 C556.4,524.0 561.1,528.0 570.1,536.2 C578.4,544.0 583.1,547.2 591.7,554.7 C600.4,562.4 603.7,571.5 613.4,574.0 C621.0,576.0 628.6,572.0 635.0,565.9 C646.0,555.4 646.1,537.6 656.7,532.6 C663.4,529.4 669.2,544.0 678.3,545.5 C686.5,546.8 691.3,539.5 700.0,539.6 C708.7,539.7 716.4,539.3 721.6,545.8 C733.7,560.9 732.0,585.5 743.3,593.4 C749.3,597.7 755.6,582.0 764.9,576.2 C772.9,571.4 779.5,572.8 786.6,567.0 C796.9,558.5 798.8,542.4 808.3,540.5 C816.1,539.0 821.3,551.2 829.9,558.6 C838.7,566.0 841.8,572.2 851.6,577.5 C859.1,581.6 864.5,580.8 873.2,582.1 C881.8,583.4 886.8,581.4 894.9,583.9 C904.1,586.8 911.7,601.0 916.5,595.7 C929.0,581.9 926.9,544.9 938.2,536.1 C944.2,531.4 952.0,551.0 959.8,561.9 C969.3,575.2 972.8,582.7 981.5,596.6" fill="none" stroke="#f39a12" stroke-width="2.2"/>
<path d="M353.5,610.2 C362.2,608.4 366.4,607.2 375.2,605.7 C383.8,604.3 388.3,602.1 396.8,603.0 C405.7,603.9 410.0,606.7 418.5,610.2 C427.4,613.8 431.0,618.5 440.1,620.9 C448.3,623.0 454.7,625.1 461.8,621.5 C472.0,616.4 475.5,608.7 483.4,599.2 C492.8,588.0 494.7,574.3 505.1,569.9 C512.0,566.9 517.9,576.7 526.7,580.7 C535.3,584.6 539.5,586.9 548.4,589.8 C556.8,592.5 562.0,591.3 570.1,594.9 C579.4,599.0 582.3,606.1 591.7,609.1 C599.6,611.6 605.1,610.6 613.4,608.6 C622.4,606.4 625.9,600.8 635.0,598.7 C643.3,596.8 648.0,598.5 656.7,598.4 C665.3,598.3 669.7,598.9 678.3,598.1 C687.1,597.2 691.6,593.1 700.0,594.1 C708.9,595.1 713.3,598.9 721.6,603.0 C730.6,607.5 734.1,613.9 743.3,615.6 C751.4,617.1 756.6,613.9 764.9,611.1 C774.0,608.1 777.6,603.9 786.6,600.9 C794.9,598.2 799.6,597.2 808.3,597.0 C816.9,596.7 821.3,598.0 829.9,599.5 C838.6,601.0 842.9,602.4 851.6,604.3 C860.2,606.2 864.8,606.4 873.2,609.1 C882.1,611.9 885.9,616.5 894.9,618.0 C903.2,619.4 908.7,619.3 916.5,616.4 C926.0,612.9 928.8,604.2 938.2,601.9 C946.1,599.9 951.6,602.9 959.8,605.6 C968.9,608.4 972.8,611.7 981.5,615.8" fill="none" stroke="#6c3fa3" stroke-width="2.2"/>
<circle cx="353.5" cy="579.4" r="3.3" fill="#f39a12"/>
<circle cx="375.2" cy="573.1" r="3.3" fill="#f39a12"/>
<circle cx="396.8" cy="561.6" r="3.3" fill="#f39a12"/>
<circle cx="418.5" cy="574.3" r="3.3" fill="#f39a12"/>
<circle cx="440.1" cy="608.9" r="3.3" fill="#f39a12"/>
<circle cx="461.8" cy="608.3" r="3.3" fill="#f39a12"/>
<circle cx="483.4" cy="543.3" r="3.3" fill="#f39a12"/>
<circle cx="505.1" cy="463.3" r="3.3" fill="#f39a12"/>
<circle cx="526.7" cy="486.7" r="3.3" fill="#f39a12"/>
<circle cx="548.4" cy="514.9" r="3.3" fill="#f39a12"/>
<circle cx="570.1" cy="536.2" r="3.3" fill="#f39a12"/>
<circle cx="591.7" cy="554.7" r="3.3" fill="#f39a12"/>
<circle cx="613.4" cy="574.0" r="3.3" fill="#f39a12"/>
<circle cx="635.0" cy="565.9" r="3.3" fill="#f39a12"/>
<circle cx="656.7" cy="532.6" r="3.3" fill="#f39a12"/>
<circle cx="678.3" cy="545.5" r="3.3" fill="#f39a12"/>
<circle cx="700.0" cy="539.6" r="3.3" fill="#f39a12"/>
<circle cx="721.6" cy="545.8" r="3.3" fill="#f39a12"/>
<circle cx="743.3" cy="593.4" r="3.3" fill="#f39a12"/>
<circle cx="764.9" cy="576.2" r="3.3" fill="#f39a12"/>
<circle cx="786.6" cy="567.0" r="3.3" fill="#f39a12"/>
<circle cx="808.3" cy="540.5" r="3.3" fill="#f39a12"/>
<circle cx="829.9" cy="558.6" r="3.3" fill="#f39a12"/>
<circle cx="851.6" cy="577.5" r="3.3" fill="#f39a12"/>
<circle cx="873.2" cy="582.1" r="3.3" fill="#f39a12"/>
<circle cx="894.9" cy="583.9" r="3.3" fill="#f39a12"/>
<circle cx="916.5" cy="595.7" r="3.3" fill="#f39a12"/>
<circle cx="938.2" cy="536.1" r="3.3" fill="#f39a12"/>
<circle cx="959.8" cy="561.9" r="3.3" fill="#f39a12"/>
<circle cx="981.5" cy="596.6" r="3.3" fill="#f39a12"/>
<circle cx="353.5" cy="610.2" r="3.3" fill="#6c3fa3"/>
<circle cx="375.2" cy="605.7" r="3.3" fill="#6c3fa3"/>
<circle cx="396.8" cy="603.0" r="3.3" fill="#6c3fa3"/>
<circle cx="418.5" cy="610.2" r="3.3" fill="#6c3fa3"/>
<circle cx="440.1" cy="620.9" r="3.3" fill="#6c3fa3"/>
<circle cx="461.8" cy="621.5" r="3.3" fill="#6c3fa3"/>
<circle cx="483.4" cy="599.2" r="3.3" fill="#6c3fa3"/>
<circle cx="505.1" cy="569.9" r="3.3" fill="#6c3fa3"/>
<circle cx="526.7" cy="580.7" r="3.3" fill="#6c3fa3"/>
<circle cx="548.4" cy="589.8" r="3.3" fill="#6c3fa3"/>
<circle cx="570.1" cy="594.9" r="3.3" fill="#6c3fa3"/>
<circle cx="591.7" cy="609.1" r="3.3" fill="#6c3fa3"/>
<circle cx="613.4" cy="608.6" r="3.3" fill="#6c3fa3"/>
<circle cx="635.0" cy="598.7" r="3.3" fill="#6c3fa3"/>
<circle cx="656.7" cy="598.4" r="3.3" fill="#6c3fa3"/>
<circle cx="678.3" cy="598.1" r="3.3" fill="#6c3fa3"/>
<circle cx="700.0" cy="594.1" r="3.3" fill="#6c3fa3"/>
<circle cx="721.6" cy="603.0" r="3.3" fill="#6c3fa3"/>
<circle cx="743.3" cy="615.6" r="3.3" fill="#6c3fa3"/>
<circle cx="764.9" cy="611.1" r="3.3" fill="#6c3fa3"/>
<circle cx="786.6" cy="600.9" r="3.3" fill="#6c3fa3"/>
<circle cx="808.3" cy="597.0" r="3.3" fill="#6c3fa3"/>
<circle cx="829.9" cy="599.5" r="3.3" fill="#6c3fa3"/>
<circle cx="851.6" cy="604.3" r="3.3" fill="#6c3fa3"/>
<circle cx="873.2" cy="609.1" r="3.3" fill="#6c3fa3"/>
<circle cx="894.9" cy="618.0" r="3.3" fill="#6c3fa3"/>
<circle cx="916.5" cy="616.4" r="3.3" fill="#6c3fa3"/>
<circle cx="938.2" cy="601.9" r="3.3" fill="#6c3fa3"/>
<circle cx="959.8" cy="605.6" r="3.3" fill="#6c3fa3"/>
<circle cx="981.5" cy="615.8" r="3.3" fill="#6c3fa3"/></svg>
<div class="r" style="left:299px;top:692.5px;width:115px;height:29.0px;background:#fff;border:1px solid #dad7e4;border-radius:3px;box-shadow:0 1px 1px rgba(30,20,60,0.05)"></div>
<svg class="r" style="left:312px;top:702.5px" width="11" height="8.5" viewBox="0 0 11 8.5"><rect x="0" y="0" width="4.8" height="8.5" rx="0.6" fill="#2b2a37"/><rect x="6" y="0" width="4.8" height="8.5" rx="0.6" fill="#2b2a37"/></svg>
<div class="t" style="left:329.40px;top:700.40px;font-size:10.4px;line-height:13px;color:#1f1d2e;-webkit-text-stroke:0.15px #1f1d2e;">Toggle Columns</div>
<div class="r" style="left:299px;top:730px;width:704px;height:30px;background:#fff;border:1px solid #dedbe8;border-radius:4px"></div>
<div class="r" style="left:512px;top:731px;width:1px;height:12px;background:#e4e2ec"></div>
<svg class="r" style="left:956px;top:679px" width="42" height="42" viewBox="0 0 42 42"><defs><filter id="sh" x="-30%" y="-30%" width="160%" height="160%"><feGaussianBlur stdDeviation="2"/></filter></defs><circle cx="21" cy="21.5" r="20.5" fill="#5123a0" opacity="0.15" filter="url(#sh)"/><circle cx="21" cy="21" r="20.3" fill="#fff"/><circle cx="21" cy="21" r="19.4" fill="#5223a0"/><path d="M21,27.5 V15.5 M16.5,19.8 L21,15.3 L25.5,19.8" fill="none" stroke="#fff" stroke-width="1.9"/></svg>
</body></html>
